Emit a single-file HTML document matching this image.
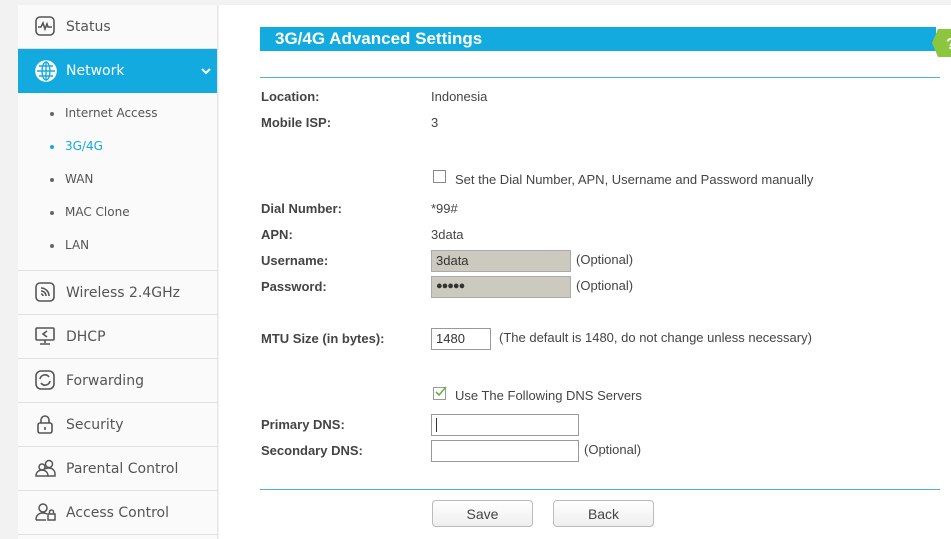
<!DOCTYPE html>
<html><head><meta charset="utf-8"><style>
*{box-sizing:border-box;margin:0;padding:0}
html{width:951px;height:539px;overflow:hidden}
body{width:951px;height:539px;overflow:hidden;background:#f2f2f2;font-family:"DejaVu Sans","Liberation Sans",sans-serif;position:relative}
#side{position:absolute;left:18px;top:5px;width:200px;height:534px;background:#fafafa;border-right:1px solid #e4e4e4;overflow:hidden}
.it{position:absolute;left:0;width:200px;height:44px;border-bottom:1px solid #e0e0e0;color:#555;font-size:14px;line-height:44px;padding-left:48px}
.it svg{position:absolute;left:17px;top:11px}
.net{background:#12aadf;color:#fff;border:none}
.sub{position:absolute;left:0;font-size:12px;color:#555;padding-left:47px}
.sub:before{content:"";position:absolute;left:32px;top:6px;width:4px;height:4px;border-radius:2px;background:#666}
.sub.a{color:#12aadf}.sub.a:before{background:#12aadf}
#main{position:absolute;left:219px;top:5px;width:732px;height:534px;background:#fff}
.hd{position:absolute;left:260px;top:27px;width:676px;height:24px;background:#12aadf;color:#fff;font:bold 17px "Liberation Sans",sans-serif;line-height:24px;padding-left:15px}
.hr{position:absolute;left:260px;width:680px;height:1px;background:#4fb0dc}
.l{position:absolute;left:261px;font:bold 13px "Liberation Sans",sans-serif;color:#444}
.v{position:absolute;left:431px;font:13px "Liberation Sans",sans-serif;color:#444}
.t{position:absolute;font:13px "Liberation Sans",sans-serif;color:#444}
.in{position:absolute;border:1px solid #999;background:#fff;font:13px "Liberation Sans",sans-serif;color:#333;padding-left:4px;line-height:19px}
.g{background:#ccc9be;border-color:#aaa}
.cb{position:absolute;width:13px;height:13px;border:1px solid #888;background:#fff}
.btn{position:absolute;top:500px;width:101px;height:27px;border:1px solid #bbb;border-radius:4px;background:linear-gradient(#fff,#eee);font:14px "Liberation Sans",sans-serif;color:#444;text-align:center;line-height:26px}
</style></head><body>
<div id="main"></div>
<div id="side">
<div class="it" style="top:0"><svg width="20" height="20" viewBox="0 0 20 20" fill="none" stroke="#555" stroke-width="1.6"><rect x="1" y="1" width="18" height="18" rx="4"/><path d="M3 11h3l2-4 2 6 2-5 1 3h4"/></svg>Status</div>
<div class="it net" style="top:44px"><svg width="22" height="22" viewBox="0 0 22 22" fill="none" stroke="#fff" stroke-width="1.6"><circle cx="11" cy="11" r="10" fill="#fff"/><g stroke="#12aadf" stroke-width="1.4"><ellipse cx="11" cy="11" rx="4" ry="9"/><path d="M11 2v18M2 11h18M4 6h14M4 16h14"/></g></svg>Network<svg style="position:absolute;left:183px;top:19px" width="10" height="7" viewBox="0 0 10 7" fill="none" stroke="#fff" stroke-width="2"><path d="M1 1l4 4 4-4"/></svg></div>
<div style="position:absolute;top:88px;left:0;width:200px;height:178px;border-bottom:1px solid #e0e0e0">
<div class="sub" style="top:13px">Internet Access</div>
<div class="sub a" style="top:46px">3G/4G</div>
<div class="sub" style="top:79px">WAN</div>
<div class="sub" style="top:112px">MAC Clone</div>
<div class="sub" style="top:145px">LAN</div>
</div>
<div class="it" style="top:266px"><svg width="20" height="20" viewBox="0 0 20 20" fill="none" stroke="#555" stroke-width="1.6"><rect x="1" y="1" width="18" height="18" rx="4"/><path d="M6 6a8 8 0 0 1 8 8M6 9a5 5 0 0 1 5 5M6 12a2 2 0 0 1 2 2"/></svg>Wireless 2.4GHz</div>
<div class="it" style="top:310px"><svg width="20" height="20" viewBox="0 0 20 20" fill="none" stroke="#555" stroke-width="1.6"><rect x="1" y="2" width="18" height="12" rx="1"/><path d="M10 14v3M5 18h10M12 5l-4 3 4 3"/></svg>DHCP</div>
<div class="it" style="top:354px"><svg width="20" height="20" viewBox="0 0 20 20" fill="none" stroke="#555" stroke-width="1.6"><rect x="1" y="1" width="18" height="18" rx="5"/><path d="M5 9a5 5 0 0 1 9-2M15 11a5 5 0 0 1-9 2"/></svg>Forwarding</div>
<div class="it" style="top:398px"><svg width="20" height="20" viewBox="0 0 20 20" fill="none" stroke="#555" stroke-width="1.6"><path d="M6 9V6a4 4 0 0 1 8 0v3"/><rect x="3" y="9" width="14" height="10" rx="2"/><path d="M10 13v3"/></svg>Security</div>
<div class="it" style="top:442px"><svg width="22" height="20" viewBox="0 0 22 20" fill="none" stroke="#555" stroke-width="1.5"><circle cx="7" cy="9" r="3"/><circle cx="14" cy="6" r="3.5"/><path d="M1 18c0-4 3-6 6-6s6 2 6 6zM10 11c1-1 2-1 4-1 3 0 6 2 6 6v2h-7"/></svg>Parental Control</div>
<div class="it" style="top:486px"><svg width="22" height="20" viewBox="0 0 22 20" fill="none" stroke="#555" stroke-width="1.5"><circle cx="8" cy="6" r="4"/><path d="M1 18c0-5 3-7 7-7 2 0 3 .5 4 1M1 18h10"/><rect x="13" y="12" width="7" height="6"/><path d="M14.5 12v-2a2 2 0 0 1 4 0v2"/></svg>Access Control</div>
</div>
<div class="hd">3G/4G Advanced Settings</div>
<svg style="position:absolute;left:932px;top:29px" width="19" height="28" viewBox="0 0 19 28"><polygon points="6,0 19,0 19,28 6,28 0,14" fill="#8cc63f"/><text x="14" y="20" font-family="Liberation Sans" font-weight="bold" font-size="16" fill="#fff">?</text></svg>
<div class="hr" style="top:77px"></div>
<div class="l" style="top:89px">Location:</div><div class="v" style="top:89px">Indonesia</div>
<div class="l" style="top:115px">Mobile ISP:</div><div class="v" style="top:115px">3</div>
<div class="cb" style="left:433px;top:170px"></div><div class="t" style="left:455px;top:172px">Set the Dial Number, APN, Username and Password manually</div>
<div class="l" style="top:201px">Dial Number:</div><div class="v" style="top:201px">*99#</div>
<div class="l" style="top:227px">APN:</div><div class="v" style="top:227px">3data</div>
<div class="l" style="top:253px">Username:</div><div class="in g" style="left:431px;top:250px;width:140px;height:22px">3data</div><div class="t" style="left:576px;top:252px">(Optional)</div>
<div class="l" style="top:279px">Password:</div><div class="in g" style="left:431px;top:276px;width:140px;height:22px;font-size:11px;letter-spacing:-1px">●●●●●</div><div class="t" style="left:576px;top:278px">(Optional)</div>
<div class="l" style="top:331px">MTU Size (in bytes):</div><div class="in" style="left:431px;top:328px;width:60px;height:22px">1480</div><div class="t" style="left:499px;top:330px">(The default is 1480, do not change unless necessary)</div>
<div class="cb" style="left:433px;top:387px;border-color:#999"><svg style="position:absolute;left:1px;top:-2px" width="12" height="12" viewBox="0 0 12 12" fill="none" stroke="#6ab04c" stroke-width="1.6"><path d="M1 6l3 3 7-8"/></svg></div><div class="t" style="left:455px;top:388px">Use The Following DNS Servers</div>
<div class="l" style="top:417px">Primary DNS:</div><div class="in" style="left:431px;top:414px;width:148px;height:22px"><span style="position:absolute;left:4px;top:3px;width:1px;height:14px;background:#333"></span></div>
<div class="l" style="top:443px">Secondary DNS:</div><div class="in" style="left:431px;top:440px;width:148px;height:22px"></div><div class="t" style="left:584px;top:442px">(Optional)</div>
<div class="hr" style="top:489px"></div>
<div class="btn" style="left:432px">Save</div>
<div class="btn" style="left:553px">Back</div>
</body></html>
